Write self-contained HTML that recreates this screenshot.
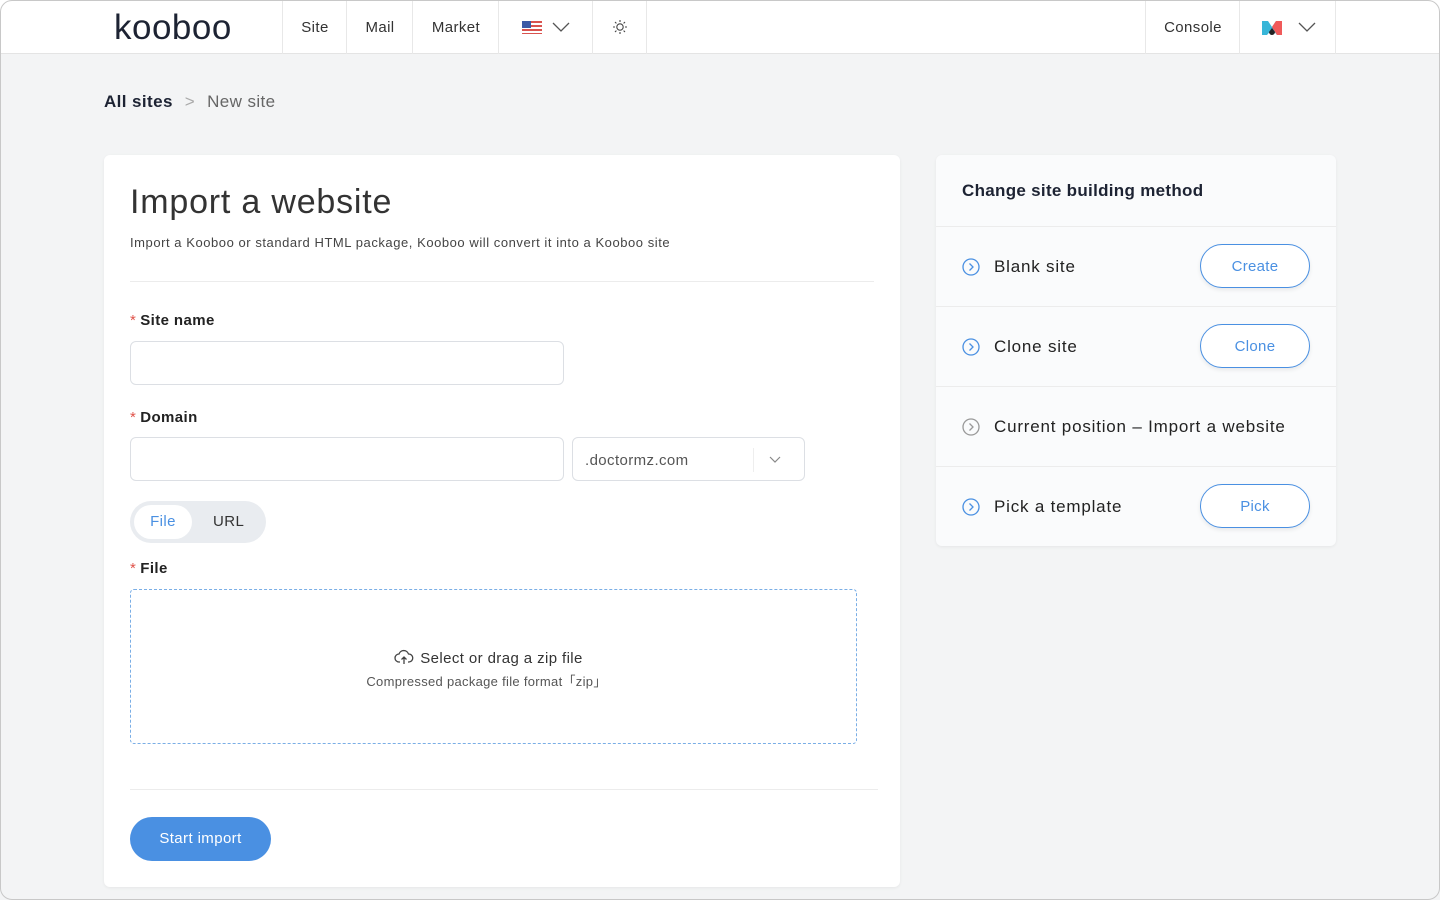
<!DOCTYPE html>
<html><head><meta charset="utf-8"><style>
*{box-sizing:border-box;margin:0;padding:0}
body{width:1440px;height:900px;background:#f3f4f5;font-family:"Liberation Sans",sans-serif;color:#222;position:relative;overflow:hidden;letter-spacing:.4px}
.frame{position:absolute;inset:0;border:1px solid #c8c8c8;border-radius:12px;pointer-events:none;z-index:9}
.top{position:absolute;left:0;top:0;width:1440px;height:54px;background:#fff;border-bottom:1px solid #e4e4e4}
.nv{position:absolute;top:0;height:54px;border-left:1px solid #e8e8e8;display:flex;align-items:center;justify-content:center;font-size:15px;color:#333}
.logo{position:absolute;left:114px;top:8px;font-size:35px;color:#1d2333;letter-spacing:0.5px}
.crumb{position:absolute;left:104px;top:92px;font-size:17px}
.card{position:absolute;background:#fff;border-radius:6px;box-shadow:0 1px 3px rgba(0,0,0,.06)}
.lbl{position:absolute;font-size:15px;color:#222;font-weight:bold}
.lbl b{color:#e0534a;font-weight:normal;margin-right:4px}
.inp{position:absolute;border:1px solid #dcdfe4;border-radius:6px;background:#fff}
.row{position:absolute;left:0;width:400px;height:80px;border-top:1px solid #ececec;display:flex;align-items:center;padding-left:26px;font-size:17px;color:#222;letter-spacing:.8px}
.ic{width:18px;height:18px;margin-right:14px}
.btn{position:absolute;right:26px;width:110px;height:44px;border:1px solid #4a90e2;border-radius:22px;background:#fff;color:#4a90e2;font-size:15px;display:flex;align-items:center;justify-content:center;box-shadow:0 2px 4px rgba(0,0,0,.08);letter-spacing:.3px}
</style></head><body>
<div class="frame"></div>
<div class="top">
<div class="logo">kooboo</div>
<div class="nv" style="left:282px;width:65px">Site</div>
<div class="nv" style="left:346px;width:67px">Mail</div>
<div class="nv" style="left:412px;width:87px">Market</div>
<div class="nv" style="left:498px;width:95px"><span style="display:inline-block;width:20px;height:13px;background:repeating-linear-gradient(#d9534f 0 2px,#fff 2px 4px);position:relative"><span style="position:absolute;left:0;top:0;width:9px;height:7px;background:#3b5aa6"></span></span><svg width="18" height="12" style="margin-left:10px"><path d="M1 2l8 8 8-8" fill="none" stroke="#555" stroke-width="1.3"/></svg></div>
<div class="nv" style="left:592px;width:55px;border-right:1px solid #e8e8e8"><svg width="16" height="16" viewBox="0 0 16 16" fill="none" stroke="#444" stroke-width="1.1"><circle cx="8" cy="8" r="3.2"/><path d="M8 1v2M8 13v2M1 8h2M13 8h2M3 3l1.4 1.4M11.6 11.6L13 13M3 13l1.4-1.4M11.6 4.4L13 3"/></svg></div>
<div class="nv" style="left:1145px;width:95px">Console</div>
<div class="nv" style="left:1239px;width:97px;border-right:1px solid #e8e8e8"><svg width="24" height="18"><path d="M2 3h6l4 6 4-6h6v14h-5l-5-6-5 6H2z" fill="#38b6d8"/><path d="M12 9l4-6h6v14h-5z" fill="#f05a5a"/><path d="M12 10l3 4a3 3 0 1 1-6 0z" fill="#222"/></svg><svg width="18" height="12" style="margin-left:14px"><path d="M1 2l8 8 8-8" fill="none" stroke="#555" stroke-width="1.3"/></svg></div>
</div>
<div class="crumb"><b style="color:#1d2333">All sites</b><span style="color:#aaa;margin:0 12px">&gt;</span><span style="color:#666">New site</span></div>

<div class="card" style="left:104px;top:155px;width:796px;height:732px">
<div style="position:absolute;left:26px;top:28px;font-size:34px;color:#333;letter-spacing:.8px">Import a website</div>
<div style="position:absolute;left:26px;top:80px;font-size:13px;color:#444;letter-spacing:.55px">Import a Kooboo or standard HTML package, Kooboo will convert it into a Kooboo site</div>
<div style="position:absolute;left:26px;top:126px;width:744px;border-top:1px solid #ececec"></div>
<div class="lbl" style="left:26px;top:157px"><b>*</b>Site name</div>
<div class="inp" style="left:26px;top:186px;width:434px;height:44px"></div>
<div class="lbl" style="left:26px;top:254px"><b>*</b>Domain</div>
<div class="inp" style="left:26px;top:282px;width:434px;height:44px"></div>
<div class="inp" style="left:468px;top:282px;width:233px;height:44px;font-size:15px;color:#555;padding:14px 0 0 12px">.doctormz.com<span style="position:absolute;left:180px;top:10px;height:24px;border-left:1px solid #eee"></span><svg width="12" height="8" style="position:absolute;left:196px;top:18px"><path d="M1 1l5 5 5-5" fill="none" stroke="#888" stroke-width="1.2"/></svg></div>
<div style="position:absolute;left:26px;top:346px;width:136px;height:42px;background:#e9ecf0;border-radius:21px"><div style="position:absolute;left:4px;top:4px;width:58px;height:34px;background:#fff;border-radius:17px;color:#4a90e2;font-size:15px;text-align:center;line-height:34px">File</div><div style="position:absolute;left:83px;top:12px;font-size:15px;color:#333">URL</div></div>
<div class="lbl" style="left:26px;top:405px"><b>*</b>File</div>
<div style="position:absolute;left:26px;top:434px;width:727px;height:155px;border:1px dashed #7aaee6;border-radius:4px;text-align:center">
<div style="margin-top:59px;font-size:15px;color:#333;margin-left:-10px"><svg width="20" height="16" viewBox="0 0 20 16" style="vertical-align:-2px;margin-right:6px" fill="none" stroke="#444" stroke-width="1.3"><path d="M6 13H5a4 4 0 0 1 0-8 5 5 0 0 1 9.5 0A4 4 0 0 1 15 13h-1M10 8v7M7.5 10.5L10 8l2.5 2.5"/></svg>Select or drag a zip file</div>
<div style="margin-top:4px;font-size:13px;color:#555;letter-spacing:.3px;margin-left:-14px">Compressed package file format「zip」</div></div>
<div style="position:absolute;left:26px;top:634px;width:748px;border-top:1px solid #ececec"></div>
<div style="position:absolute;left:26px;top:662px;width:141px;height:44px;background:#4a90e2;border-radius:22px;color:#fff;font-size:15px;text-align:center;line-height:44px">Start import</div>
</div>

<div class="card" style="left:936px;top:155px;width:400px;height:391px;background:#fafbfc">
<div style="position:absolute;left:26px;top:26px;font-size:17px;font-weight:bold;color:#1d2333;letter-spacing:.3px">Change site building method</div>
<div class="row" style="top:71px"><svg class="ic" viewBox="0 0 18 18" fill="none" stroke="#4a90e2" stroke-width="1.3"><circle cx="9" cy="9" r="8"/><path d="M7.5 5.5L11 9l-3.5 3.5"/></svg>Blank site<div class="btn" style="top:17px">Create</div></div>
<div class="row" style="top:151px"><svg class="ic" viewBox="0 0 18 18" fill="none" stroke="#4a90e2" stroke-width="1.3"><circle cx="9" cy="9" r="8"/><path d="M7.5 5.5L11 9l-3.5 3.5"/></svg>Clone site<div class="btn" style="top:17px">Clone</div></div>
<div class="row" style="top:231px"><svg class="ic" viewBox="0 0 18 18" fill="none" stroke="#999" stroke-width="1.3"><circle cx="9" cy="9" r="8"/><path d="M7.5 5.5L11 9l-3.5 3.5"/></svg>Current position – Import a website</div>
<div class="row" style="top:311px"><svg class="ic" viewBox="0 0 18 18" fill="none" stroke="#4a90e2" stroke-width="1.3"><circle cx="9" cy="9" r="8"/><path d="M7.5 5.5L11 9l-3.5 3.5"/></svg>Pick a template<div class="btn" style="top:17px">Pick</div></div>
</div>
</body></html>
